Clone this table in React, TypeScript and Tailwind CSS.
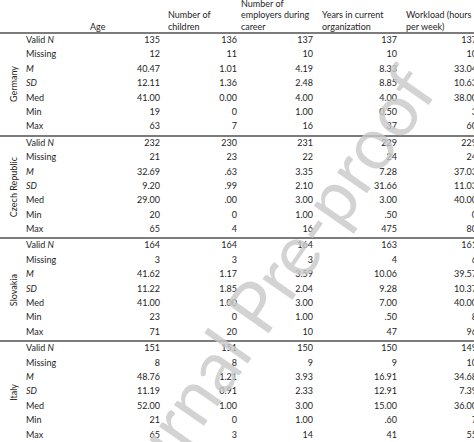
import React from "react";

type Row = { label: React.ReactNode; values: string[] };

const labels: React.ReactNode[] = [
  <>Valid <i>N</i></>,
  "Missing",
  <i>M</i>,
  <i>SD</i>,
  "Med",
  "Min",
  "Max",
];

const blocks: { country: string; cols: string[][] }[] = [
  {
    country: "Germany",
    cols: [
      ["135", "12", "40.47", "12.11", "41.00", "19", "63"],
      ["136", "11", "1.01", "1.36", "0.00", "0", "7"],
      ["137", "10", "4.19", "2.48", "4.00", "1.00", "16"],
      ["137", "10", "8.33", "8.85", "4.00", "0.50", "37"],
      ["137", "10", "33.04", "10.63", "38.00", "3", "60"],
    ],
  },
  {
    country: "Czech Republic",
    cols: [
      ["232", "21", "32.69", "9.20", "29.00", "20", "65"],
      ["230", "23", ".63", ".99", ".00", "0", "4"],
      ["231", "22", "3.35", "2.10", "3.00", "1.00", "16"],
      ["229", "24", "7.28", "31.66", "3.00", ".50", "475"],
      ["229", "24", "37.03", "11.03", "40.00", "0", "80"],
    ],
  },
  {
    country: "Slovakia",
    cols: [
      ["164", "3", "41.62", "11.22", "41.00", "23", "71"],
      ["164", "3", "1.17", "1.85", "1.00", "0", "20"],
      ["164", "3", "3.59", "2.04", "3.00", "1.00", "10"],
      ["163", "4", "10.06", "9.28", "7.00", ".50", "47"],
      ["161", "6", "39.57", "10.37", "40.00", "8", "96"],
    ],
  },
  {
    country: "Italy",
    cols: [
      ["151", "8", "48.76", "11.19", "52.00", "21", "65"],
      ["151", "8", "1.21", "0.91", "1.00", "0", "3"],
      ["150", "9", "3.93", "2.33", "3.00", "1.00", "14"],
      ["150", "9", "16.91", "12.91", "15.00", ".60", "41"],
      ["149", "10", "34.68", "7.39", "36.00", "7", "55"],
    ],
  },
];

const grid = "grid grid-cols-[66px_75px_77px_76px_84px_80px]";

function Block({ country, cols }: { country: string; cols: string[][] }) {
  const rows: Row[] = labels.map((label, i) => ({ label, values: cols.map((c) => c[i]) }));
  return (
    <div className="border-t-2 border-[#7c7c7c] flex">
      <div className="w-[22px] shrink-0 flex items-center justify-center">
        <span className="[writing-mode:vertical-rl] rotate-180 whitespace-nowrap pr-[6px]">{country}</span>
      </div>
      <div className="flex flex-col">
        {rows.map((r, i) => (
          <div key={i} className={`${grid} h-[14.4px] items-start`}>
            <div className="pl-[4px]">{r.label}</div>
            {r.values.map((v, j) => (
              <div key={j} className="text-right pr-[3px]">{v}</div>
            ))}
          </div>
        ))}
      </div>
    </div>
  );
}

export default function App() {
  return (
    <div className="relative w-[474px] h-[442px] overflow-hidden bg-white text-[#1e1e1e] text-[9px] leading-[11.5px] font-['Lato',sans-serif]">
      <div className="w-[480px]">
        <div className="flex h-[32px] items-end">
          <div className="w-[22px] shrink-0" />
          <div className={`${grid} items-end`}>
            <div />
            <div className="pl-[2px]">Age</div>
            <div className="pl-[5px] whitespace-nowrap">Number of<br />children</div>
            <div className="pl-[1px] whitespace-nowrap">Number of<br />employers during<br />career</div>
            <div className="pl-[6px] whitespace-nowrap">Years in current<br />organization</div>
            <div className="pl-[6px] whitespace-nowrap">Workload (hours<br />per week)</div>
          </div>
        </div>
        {blocks.map((b) => (
          <Block key={b.country} country={b.country} cols={b.cols} />
        ))}
      </div>

      {/* watermark */}
      <div className="pointer-events-none absolute inset-0">
        <div className="absolute left-[258px] top-[300px] -translate-x-1/2 -translate-y-1/2 -rotate-[55deg] whitespace-nowrap text-[72px] leading-none text-[#c9c9c9] opacity-80 font-['Lato',sans-serif]">
          Journal Pre-proof
        </div>
      </div>
    </div>
  );
}
